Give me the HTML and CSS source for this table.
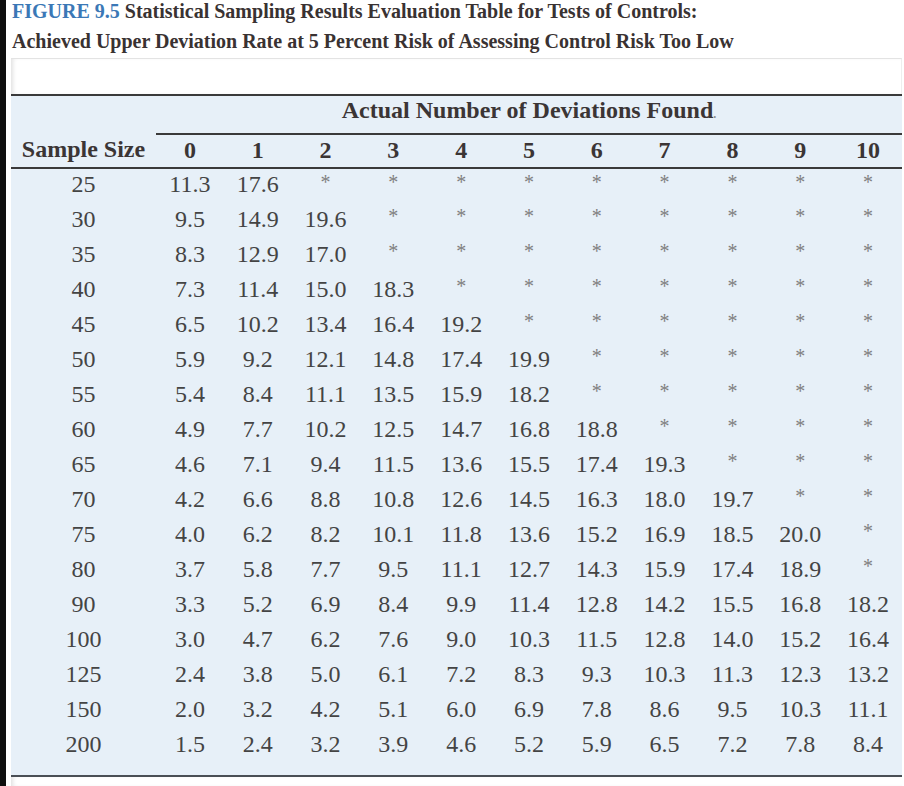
FILE: index.html
```html
<!DOCTYPE html>
<html lang="en">
<head>
<meta charset="utf-8">
<title>Figure 9.5</title>
<link rel="stylesheet" href="styles.css">
</head>
<body>
<div class="page">
  <div class="title">
    <div class="title-line"><span class="fig">FIGURE 9.5</span> Statistical Sampling Results Evaluation Table for Tests of Controls:</div>
    <div class="title-line">Achieved Upper Deviation Rate at 5 Percent Risk of Assessing Control Risk Too Low</div>
  </div>
  <div class="panel">
    <div class="blank"></div>
    <div class="table-wrap">
      <table class="tbl">
        <colgroup>
          <col class="col-size">
          <col><col><col><col><col><col><col><col><col><col><col>
        </colgroup>
        <thead>
          <tr class="h1">
            <th></th>
            <th colspan="11" class="span-head"><div class="span-inner">Actual Number of Deviations Found<span class="dot">.</span></div></th>
          </tr>
          <tr class="h2">
            <th class="size-h">Sample Size</th>
            <th>0</th><th>1</th><th>2</th><th>3</th><th>4</th><th>5</th><th>6</th><th>7</th><th>8</th><th>9</th><th>10</th>
          </tr>
        </thead>
        <tbody>
          <tr><td>25</td><td>11.3</td><td>17.6</td><td><span class="ast">*</span></td><td><span class="ast">*</span></td><td><span class="ast">*</span></td><td><span class="ast">*</span></td><td><span class="ast">*</span></td><td><span class="ast">*</span></td><td><span class="ast">*</span></td><td><span class="ast">*</span></td><td><span class="ast">*</span></td></tr>
          <tr><td>30</td><td>9.5</td><td>14.9</td><td>19.6</td><td><span class="ast">*</span></td><td><span class="ast">*</span></td><td><span class="ast">*</span></td><td><span class="ast">*</span></td><td><span class="ast">*</span></td><td><span class="ast">*</span></td><td><span class="ast">*</span></td><td><span class="ast">*</span></td></tr>
          <tr><td>35</td><td>8.3</td><td>12.9</td><td>17.0</td><td><span class="ast">*</span></td><td><span class="ast">*</span></td><td><span class="ast">*</span></td><td><span class="ast">*</span></td><td><span class="ast">*</span></td><td><span class="ast">*</span></td><td><span class="ast">*</span></td><td><span class="ast">*</span></td></tr>
          <tr><td>40</td><td>7.3</td><td>11.4</td><td>15.0</td><td>18.3</td><td><span class="ast">*</span></td><td><span class="ast">*</span></td><td><span class="ast">*</span></td><td><span class="ast">*</span></td><td><span class="ast">*</span></td><td><span class="ast">*</span></td><td><span class="ast">*</span></td></tr>
          <tr><td>45</td><td>6.5</td><td>10.2</td><td>13.4</td><td>16.4</td><td>19.2</td><td><span class="ast">*</span></td><td><span class="ast">*</span></td><td><span class="ast">*</span></td><td><span class="ast">*</span></td><td><span class="ast">*</span></td><td><span class="ast">*</span></td></tr>
          <tr><td>50</td><td>5.9</td><td>9.2</td><td>12.1</td><td>14.8</td><td>17.4</td><td>19.9</td><td><span class="ast">*</span></td><td><span class="ast">*</span></td><td><span class="ast">*</span></td><td><span class="ast">*</span></td><td><span class="ast">*</span></td></tr>
          <tr><td>55</td><td>5.4</td><td>8.4</td><td>11.1</td><td>13.5</td><td>15.9</td><td>18.2</td><td><span class="ast">*</span></td><td><span class="ast">*</span></td><td><span class="ast">*</span></td><td><span class="ast">*</span></td><td><span class="ast">*</span></td></tr>
          <tr><td>60</td><td>4.9</td><td>7.7</td><td>10.2</td><td>12.5</td><td>14.7</td><td>16.8</td><td>18.8</td><td><span class="ast">*</span></td><td><span class="ast">*</span></td><td><span class="ast">*</span></td><td><span class="ast">*</span></td></tr>
          <tr><td>65</td><td>4.6</td><td>7.1</td><td>9.4</td><td>11.5</td><td>13.6</td><td>15.5</td><td>17.4</td><td>19.3</td><td><span class="ast">*</span></td><td><span class="ast">*</span></td><td><span class="ast">*</span></td></tr>
          <tr><td>70</td><td>4.2</td><td>6.6</td><td>8.8</td><td>10.8</td><td>12.6</td><td>14.5</td><td>16.3</td><td>18.0</td><td>19.7</td><td><span class="ast">*</span></td><td><span class="ast">*</span></td></tr>
          <tr><td>75</td><td>4.0</td><td>6.2</td><td>8.2</td><td>10.1</td><td>11.8</td><td>13.6</td><td>15.2</td><td>16.9</td><td>18.5</td><td>20.0</td><td><span class="ast">*</span></td></tr>
          <tr><td>80</td><td>3.7</td><td>5.8</td><td>7.7</td><td>9.5</td><td>11.1</td><td>12.7</td><td>14.3</td><td>15.9</td><td>17.4</td><td>18.9</td><td><span class="ast">*</span></td></tr>
          <tr><td>90</td><td>3.3</td><td>5.2</td><td>6.9</td><td>8.4</td><td>9.9</td><td>11.4</td><td>12.8</td><td>14.2</td><td>15.5</td><td>16.8</td><td>18.2</td></tr>
          <tr><td>100</td><td>3.0</td><td>4.7</td><td>6.2</td><td>7.6</td><td>9.0</td><td>10.3</td><td>11.5</td><td>12.8</td><td>14.0</td><td>15.2</td><td>16.4</td></tr>
          <tr><td>125</td><td>2.4</td><td>3.8</td><td>5.0</td><td>6.1</td><td>7.2</td><td>8.3</td><td>9.3</td><td>10.3</td><td>11.3</td><td>12.3</td><td>13.2</td></tr>
          <tr><td>150</td><td>2.0</td><td>3.2</td><td>4.2</td><td>5.1</td><td>6.0</td><td>6.9</td><td>7.8</td><td>8.6</td><td>9.5</td><td>10.3</td><td>11.1</td></tr>
          <tr><td>200</td><td>1.5</td><td>2.4</td><td>3.2</td><td>3.9</td><td>4.6</td><td>5.2</td><td>5.9</td><td>6.5</td><td>7.2</td><td>7.8</td><td>8.4</td></tr>
        </tbody>
      </table>
    </div>
    <div class="tail"></div>
  </div>
</div>
</body>
</html>
```

FILE: styles.css
```css
html, body {
  margin: 0;
  padding: 0;
}
body {
  background: #ffffff;
  border-left: 6px solid #0e0e0e;
  min-height: 786px;
  box-sizing: border-box;
  font-family: "Liberation Serif", "Times New Roman", serif;
  color: #3b3535;
}
.page {
  padding: 0 2px 0 5px;
}
.title {
  display: flex;
  flex-direction: column;
  gap: 8px;
  font-weight: bold;
  font-size: 20px;
  line-height: 22px;
  color: #393232;
  padding-left: 1px;
}
.title-line {
  white-space: nowrap;
}
.fig {
  color: #3b78b6;
}
.panel {
  margin-top: 6px;
  width: 891px;
}
.blank {
  height: 35px;
  background: #ffffff;
  border-top: 1px solid #e3e3e3;
  border-right: 1px solid #eeeeee;
  box-shadow: inset 4px 0 4px -2px rgba(0, 0, 0, 0.12);
}
.table-wrap {
  background: #e7f0f8;
  border-top: 2px solid #3a3a3a;
  border-bottom: 2px solid #4a4f55;
  padding-bottom: 12px;
}
.tail {
  height: 9px;
  box-shadow: inset 4px 0 4px -2px rgba(0, 0, 0, 0.12);
}
.tbl {
  width: 100%;
  border-collapse: collapse;
  border-spacing: 0;
  table-layout: fixed;
  font-size: 24px;
  color: #444444;
}
.col-size {
  width: 145px;
}
.tbl th,
.tbl td {
  padding: 0 0 4px 0;
  text-align: center;
  vertical-align: middle;
  white-space: nowrap;
  line-height: 28px;
}
.tbl th {
  font-weight: bold;
  color: #3b3535;
}
.h1 {
  height: 34px;
}
.h1 th {
  padding-bottom: 5px;
}
.span-head {
  border-bottom: 2px solid #3a3a3a;
}
.dot {
  font-size: 12px;
  color: #8a8a8a;
}
.h2 {
  height: 34px;
}
.h2 th {
  border-bottom: 2px solid #3a3a3a;
  padding-bottom: 3px;
}
.tbl tbody tr {
  height: 35px;
}
.ast {
  font-size: 20px;
  color: #7f7f7f;
  position: relative;
  top: -3px;
}
```
